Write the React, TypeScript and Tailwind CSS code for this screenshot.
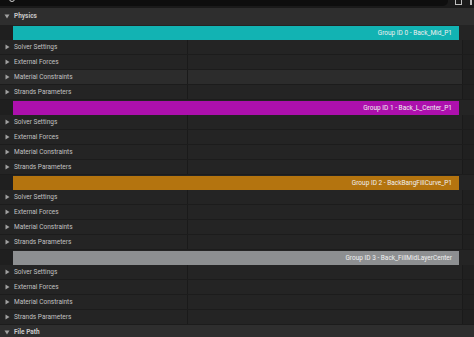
import React from "react";

const groups = [
  { label: "Group ID 0 - Back_Mid_P1", color: "bg-[#12b3b3]" },
  { label: "Group ID 1 - Back_L_Center_P1", color: "bg-[#ad10ad]" },
  { label: "Group ID 2 - BackBangFillCurve_P1", color: "bg-[#b4740f]" },
  { label: "Group ID 3 - Back_FillMidLayerCenter", color: "bg-[#8d8f91]" },
];

const items = ["Solver Settings", "External Forces", "Material Constraints", "Strands Parameters"];

function RightTri() {
  return (
    <svg width="5" height="6" viewBox="0 0 5 6" className="shrink-0">
      <path d="M0.5 0.5 L4.5 3 L0.5 5.5 Z" fill="#a0a0a0" />
    </svg>
  );
}

function DownTri() {
  return (
    <svg width="6" height="5" viewBox="0 0 6 5" className="shrink-0">
      <path d="M0.5 0.5 L5.5 0.5 L3 4.5 Z" fill="#a0a0a0" />
    </svg>
  );
}

function Row({ label, highlight }: { label: string; highlight?: boolean }) {
  return (
    <div className={`flex h-[15px] border-b border-[#1c1c1c] ${highlight ? "bg-[#2c2c2c]" : "bg-[#242424]"}`}>
      <div className="flex items-center w-[188px] pl-[5px] gap-[4px] border-r border-[#1a1a1a]">
        <RightTri />
        <span className="text-[6.5px] text-[#c2c2c2] leading-none">{label}</span>
      </div>
      <div className="flex-1 border-r border-[#1a1a1a]" />
      <div className="w-[11px] bg-[#202020]" />
    </div>
  );
}

function GroupBar({ label, color }: { label: string; color: string }) {
  return (
    <div className="flex h-[15px] bg-[#242424]">
      <div className="w-[13px] bg-[#1f1f1f]" />
      <div className={`w-[446px] ${color} mt-[1px] flex items-center justify-end pr-[7px]`}>
        <span className="text-[6.5px] text-[#f0f0f0] leading-none">{label}</span>
      </div>
      <div className="flex-1" />
    </div>
  );
}

export default function App() {
  return (
    <div className="w-[474px] h-[337px] overflow-hidden bg-[#1a1a1a]" style={{ fontFamily: "Roboto, 'Noto Sans', sans-serif" }}>
      <div className="flex h-[8px] items-start">
        <div className="w-[448px] h-[6px] bg-[#0e0e0e] rounded-br-[5px] relative">
          <div className="absolute left-[9px] top-[-4px] w-[6px] h-[6px] rounded-full border-[1.5px] border-[#d0d0d0]" />
        </div>
        <div className="ml-[7px] w-[7px] h-[5px] border border-[#bdbdbd] border-t-0" />
        <div className="ml-[8px] w-[2px] h-[5px] bg-[#bdbdbd]" />
      </div>
      <div className="flex items-center h-[17px] bg-[#2e2e2e] pl-[4px] gap-[4px]">
        <DownTri />
        <span className="text-[6.5px] font-bold text-[#c8c8c8] leading-none">Physics</span>
      </div>
      {groups.map((g, gi) => (
        <div key={gi}>
          <GroupBar label={g.label} color={g.color} />
          {items.map((it, i) => (
            <Row key={i} label={it} highlight={gi === 0 && i === 2} />
          ))}
        </div>
      ))}
      <div className="flex items-center h-[15px] bg-[#2e2e2e] pl-[4px] gap-[4px]">
        <DownTri />
        <span className="text-[6.5px] font-bold text-[#c8c8c8] leading-none">File Path</span>
      </div>
    </div>
  );
}
